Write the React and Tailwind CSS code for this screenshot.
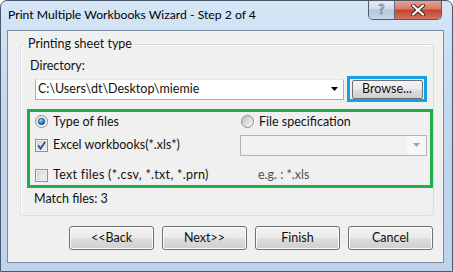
import React from 'react';

const RadioIcon = ({ checked }) => (
  <svg width="13" height="13" viewBox="0 0 13 13" className="shrink-0">
    <defs>
      <linearGradient id={checked ? 'ring-on' : 'ring-off'} x1="0" y1="0" x2="1" y2="1">
        <stop offset="0" stopColor={checked ? '#e4e4e4' : '#bdbdbd'} />
        <stop offset="1" stopColor="#fbfbfb" />
      </linearGradient>
      <radialGradient id="dot" cx="0.4" cy="0.35" r="0.75">
        <stop offset="0" stopColor="#9fe0fb" />
        <stop offset="0.5" stopColor="#2a84cc" />
        <stop offset="1" stopColor="#163f74" />
      </radialGradient>
    </defs>
    <circle cx="6.5" cy="6.5" r="6" fill={`url(#${checked ? 'ring-on' : 'ring-off'})`} stroke="#8c8f93" />
    {checked && <circle cx="6.5" cy="6.5" r="3.3" fill="url(#dot)" stroke="#1c4b7d" strokeWidth="0.6" />}
  </svg>
);

const CheckIcon = ({ checked }) => (
  <svg width="13" height="13" viewBox="0 0 13 13" className="shrink-0">
    <defs>
      <linearGradient id="cbfill" x1="0" y1="0" x2="1" y2="1">
        <stop offset="0" stopColor="#d4d4d4" />
        <stop offset="1" stopColor="#f7f7f7" />
      </linearGradient>
    </defs>
    <rect x="0.5" y="0.5" width="12" height="12" fill="#f4f4f4" stroke="#8e8f8f" />
    <rect x="2.5" y="2.5" width="8" height="8" fill="url(#cbfill)" stroke="#c6c6c6" strokeWidth="0.5" />
    {checked && <path d="M3.2 6.4 L5.6 9.6 L10.2 2.8" fill="none" stroke="#2d4f9e" strokeWidth="1.8" />}
  </svg>
);

const WinButton = ({ children, className = '' }) => (
  <button
    className={`h-[24px] w-[85px] rounded-[3px] border border-[#707070] bg-[linear-gradient(#f3f3f3_0%,#ebebeb_48%,#dddddd_52%,#cfcfcf_100%)] shadow-[inset_0_0_0_1px_#fbfbfb] text-[12.5px] text-[#111] ${className}`}
  >
    {children}
  </button>
);

export default function App() {
  return (
    <div className="w-[453px] h-[272px] flex flex-col rounded-t-[7px] border border-[#4a5a6c] bg-[linear-gradient(180deg,#d6e6f6_0%,#c2d7ee_40%,#bfd4ec_100%)] font-['Lato',sans-serif] overflow-hidden">
      {/* title bar */}
      <div className="h-[29px] flex items-start shrink-0">
        <div className="pl-[7px] pt-[6px] text-[12.2px] leading-[16px] text-black">
          Print Multiple Workbooks Wizard - Step 2 of 4
        </div>
        <div className="ml-auto mr-[10px] flex h-[20px] -mt-px rounded-b-[5px] border border-t-0 border-[#4d5e72] overflow-hidden">
          <div className="w-[26px] flex items-center justify-center border-r border-[#5d6d80] bg-[linear-gradient(#e6eef6_0%,#cfdcea_48%,#b4c6da_52%,#c6d6e7_100%)]">
            <span className="text-[13px] font-bold leading-none text-white [-webkit-text-stroke:0.6px_#3c4a5a]">?</span>
          </div>
          <div className="w-[46px] flex items-center justify-center bg-[linear-gradient(#e9a89b_0%,#d97a68_48%,#c4412c_52%,#d4735c_100%)]">
            <svg width="14" height="12" viewBox="0 0 14 12">
              <path d="M2 1.5 L12 10.5 M12 1.5 L2 10.5" stroke="#3d1f1a" strokeWidth="4" strokeLinecap="round" />
              <path d="M2 1.5 L12 10.5 M12 1.5 L2 10.5" stroke="#ffffff" strokeWidth="2.2" strokeLinecap="round" />
            </svg>
          </div>
        </div>
      </div>

      {/* client area */}
      <div className="ml-[6px] mr-[8px] mb-[8px] flex-1 flex flex-col border border-[#7b8ca0] bg-[#f0f0f0] text-[12.5px] text-[#111]">
        <fieldset className="ml-[12px] mt-[5px] w-[411px] h-[180px] rounded-[3px] border border-[#d5dfe5] shadow-[inset_1px_1px_0_#ffffff] px-0 pb-[6px] pt-[6px]">
          <legend className="ml-[5px] px-[2px] leading-[16px]">Printing sheet type</legend>

          <div className="ml-[9px] leading-[16px]">Directory:</div>

          <div className="mt-[2px] ml-[14px] flex items-center gap-[3px] h-[26px]">
            <div className="w-[309px] h-[21px] flex items-center border border-[#abadb3] border-t-[#e3e9ef] bg-white pl-[2px] pr-[5px]">
              <span className="flex-1 leading-[16px]">{'C:\\Users\\dt\\Desktop\\miemie'}</span>
              <svg width="7" height="4" viewBox="0 0 7 4">
                <path d="M0 0 H7 L3.5 4 Z" fill="#000" />
              </svg>
            </div>
            <div className="w-[80px] h-[26px] border-[3px] border-[#16a1e4] flex items-center justify-center">
              <button className="w-[71px] h-[19px] rounded-[2px] border border-[#707070] bg-[linear-gradient(#f3f3f3_0%,#ebebeb_48%,#dddddd_52%,#cfcfcf_100%)] text-[12.5px] leading-none text-[#111]">
                Browse...
              </button>
            </div>
          </div>

          <div className="mt-[7px] ml-[6px] w-[406px] h-[79px] border-[3px] border-[#20ad4b] pl-[5px] pr-[3px] grid grid-cols-[205px_1fr]">
            <div className="h-[17px] mt-[1px] flex items-center gap-[5px]">
              <RadioIcon checked />
              <span className="leading-[16px]">Type of files</span>
            </div>
            <div className="h-[17px] mt-[1px] flex items-center gap-[5px] pl-[1px]">
              <RadioIcon />
              <span className="leading-[16px]">File specification</span>
            </div>

            <div className="h-[21px] mt-[3px] flex items-center gap-[5px]">
              <CheckIcon checked />
              <span className="leading-[16px]">Excel workbooks(*.xls*)</span>
            </div>
            <div className="h-[21px] mt-[3px] flex border border-[#b5b5b5] bg-[#f0f0f0]">
              <div className="flex-1 m-[2px] bg-[#f2f2f2]" />
              <div className="w-[20px] flex items-center justify-center bg-[#f7f7f7]">
                <svg width="7" height="4" viewBox="0 0 7 4">
                  <path d="M0 0 H7 L3.5 4 Z" fill="#a2a2a2" />
                </svg>
              </div>
            </div>

            <div className="h-[16px] mt-[10px] flex items-center gap-[5px]">
              <CheckIcon />
              <span className="leading-[16px] tracking-[0.3px]">Text files (*.csv, *.txt, *.prn)</span>
            </div>
            <div className="h-[16px] mt-[10px] pl-[18px] leading-[16px] text-[#505050]">e.g. : *.xls</div>
          </div>

          <div className="mt-[3px] ml-[13px] leading-[16px]">Match files: 3</div>
        </fieldset>

        <div className="mt-[10px] mr-[10px] flex justify-end gap-[8px]">
          <WinButton>&lt;&lt;Back</WinButton>
          <WinButton>Next&gt;&gt;</WinButton>
          <WinButton>Finish</WinButton>
          <WinButton>Cancel</WinButton>
        </div>
      </div>
    </div>
  );
}
